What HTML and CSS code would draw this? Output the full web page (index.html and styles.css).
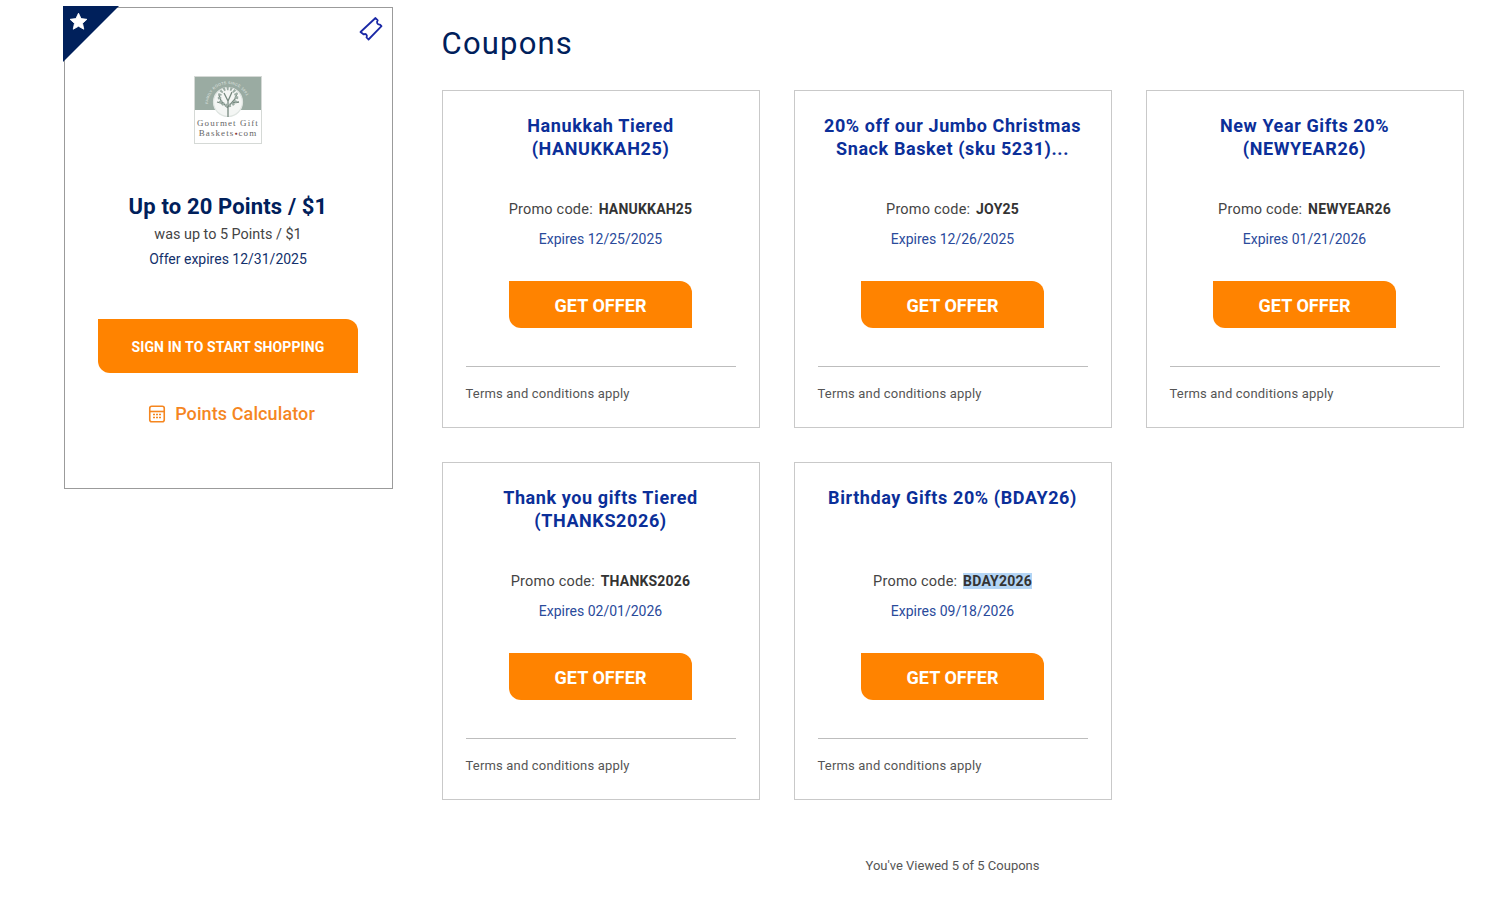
FILE: index.html
```html
<!DOCTYPE html>
<html lang="en">
<head>
<meta charset="utf-8">
<title>Coupons</title>
<link rel="stylesheet" href="styles.css">
</head>
<body>
<div class="page">
  <aside class="store">
    <div class="ribbon"></div>
    <svg class="ribbon-star" viewBox="0 0 24 24"><path d="M12 2.5l2.9 6.2 6.7.8-5 4.6 1.4 6.7L12 17.4l-6 3.4 1.4-6.7-5-4.6 6.7-.8z" fill="#fff" stroke="#fff" stroke-linejoin="round"/></svg>
    <svg class="ticket" viewBox="0 0 24 25" fill="none" stroke="#1a28a6" stroke-width="1.8" stroke-linejoin="round"><path d="M1.5 16L16.5 2l2.2 2.4c-1.6 2-.2 4.6 2.300 4.200l1.500 1.600L9.500 23.500l-2-2.100c1.300-2.300-.8-4.100-2.700-3z"/></svg>
    <div class="logo">
      <div class="logo-top">
        <svg class="logo-tree" viewBox="0 0 50 50">
          <defs><path id="logo-arc" d="M5 30a20 20 0 0 1 40 0"/></defs>
          <text class="logo-arc-text"><textPath href="#logo-arc">FAMILY ROOTS SINCE 1991</textPath></text>
          <circle cx="25" cy="28" r="14.500" fill="#f4f6f4" stroke="#dfe5e1" stroke-width="1.200"/>
          <path d="M25 43V27M25 34l-7-7M25 33l7-8M21 30l-7-2M29 29l7-1M25 27l-4-8M25 27l4-9M18 27l-2-6M32 25l2-6" stroke="#76877e" stroke-width="1.300" fill="none"/>
          <circle cx="25" cy="23" r="8.500" fill="none" stroke="#9dada5" stroke-width="3.500" stroke-dasharray="2 1.500"/>
        </svg>
      </div>
      <div class="logo-text">Gourmet Gift<br>Baskets<span class="logo-dot">●</span>com</div>
    </div>
    <h2 class="rate">Up to 20 Points / $1</h2>
    <p class="was">was up to 5 Points / $1</p>
    <p class="offer">Offer expires 12/31/2025</p>
    <a class="btn btn-signin" href="#">SIGN IN TO START SHOPPING</a>
    <a class="calc" href="#">
      <svg class="calc-icon" viewBox="0 0 18 18" fill="none" stroke="#f5861f" stroke-width="1.600"><rect x="1.750" y="1.300" width="14.500" height="15.500" rx="2"/><path d="M2 6.500h14"/><path d="M5 9.500h2M8 9.500h2M11 9.500h2M5 12.500h2M8 12.500h2M11 12.500h2" stroke-width="1.400"/></svg>
      <span>Points Calculator</span>
    </a>
  </aside>
  <main class="main">
    <h1 class="heading">Coupons</h1>
    <div class="grid">
      <article class="card">
        <h3 class="card-title">Hanukkah Tiered (HANUKKAH25)</h3>
        <p class="promo">Promo code: <b class="code">HANUKKAH25</b></p>
        <p class="expires">Expires 12/25/2025</p>
        <a class="btn btn-offer" href="#">GET OFFER</a>
        <p class="terms">Terms and conditions apply</p>
      </article>
      <article class="card">
        <h3 class="card-title">20% off our Jumbo Christmas Snack Basket (sku 5231)...</h3>
        <p class="promo">Promo code: <b class="code">JOY25</b></p>
        <p class="expires">Expires 12/26/2025</p>
        <a class="btn btn-offer" href="#">GET OFFER</a>
        <p class="terms">Terms and conditions apply</p>
      </article>
      <article class="card">
        <h3 class="card-title">New Year Gifts 20% (NEWYEAR26)</h3>
        <p class="promo">Promo code: <b class="code">NEWYEAR26</b></p>
        <p class="expires">Expires 01/21/2026</p>
        <a class="btn btn-offer" href="#">GET OFFER</a>
        <p class="terms">Terms and conditions apply</p>
      </article>
      <article class="card">
        <h3 class="card-title">Thank you gifts Tiered (THANKS2026)</h3>
        <p class="promo">Promo code: <b class="code">THANKS2026</b></p>
        <p class="expires">Expires 02/01/2026</p>
        <a class="btn btn-offer" href="#">GET OFFER</a>
        <p class="terms">Terms and conditions apply</p>
      </article>
      <article class="card">
        <h3 class="card-title">Birthday Gifts 20% (BDAY26)</h3>
        <p class="promo">Promo code: <b class="code code-selected">BDAY2026</b></p>
        <p class="expires">Expires 09/18/2026</p>
        <a class="btn btn-offer" href="#">GET OFFER</a>
        <p class="terms">Terms and conditions apply</p>
      </article>
    </div>
    <p class="viewed">You've Viewed 5 of 5 Coupons</p>
  </main>
</div>
</body>
</html>
```
FILE: styles.css
```css
* { box-sizing: border-box; }
html, body { margin: 0; padding: 0; background: #fff; }
body { font-family: Roboto, "Liberation Sans", sans-serif; color: #444; height: 907px; overflow: hidden; }
h1, h2, h3, p { margin: 0; font-weight: 400; }
a { text-decoration: none; }

.page { display: flex; align-items: flex-start; gap: 49px; padding: 7px 36px 0 63.5px; }

.store { position: relative; flex: 0 0 329px; height: 482px; border: 1px solid #9b9b9b; display: flex; flex-direction: column; align-items: center; padding-top: 68px; }
.ribbon { position: absolute; left: -2px; top: -2px; width: 0; height: 0; border-top: 56px solid #00205b; border-right: 56px solid transparent; }
.ribbon-star { position: absolute; left: 3px; top: 3px; width: 21px; height: 21px; }
.ticket { position: absolute; right: 9px; top: 8px; width: 24px; height: 25px; }

.logo { width: 68px; height: 68px; border: 1px solid #d5d9d6; background: #fff; display: flex; flex-direction: column; }
.logo-top { flex: none; height: 33px; background: #9aaba2; display: flex; justify-content: center; }
.logo-tree { width: 50px; height: 50px; flex: none; margin-top: -3px; position: relative; }
.logo-arc-text { font-family: "Liberation Sans", sans-serif; font-size: 3.600px; letter-spacing: .3px; fill: #e6ebe8; }
.logo-text { margin-top: 8px; font-family: "Liberation Serif", serif; font-size: 9px; line-height: 10px; letter-spacing: 1.100px; color: #666; text-align: center; white-space: nowrap; position: relative; }
.logo-dot { color: #8c3a3a; font-size: 5px; vertical-align: 1px; }

.rate { margin-top: 49px; font-size: 22px; line-height: 28px; font-weight: 700; color: #00205b; letter-spacing: .15px; }
.was { margin-top: 2px; font-size: 14.400px; line-height: 24px; color: #444; }
.offer { font-size: 14px; line-height: 24px; color: #12306b; }

.btn { display: flex; align-items: center; justify-content: center; background: #ff8300; color: #fff; font-weight: 700; border-radius: 0 12px 0 12px; }
.btn-signin { margin-top: 48px; width: 260px; height: 54px; padding-top: 2px; font-size: 14px; letter-spacing: .1px; }
.calc { margin: 30px 0 0 7px; display: flex; align-items: center; gap: 9px; color: #f5861f; font-size: 18px; letter-spacing: .1px; font-weight: 500; }
.calc-icon { width: 18px; height: 18px; }

.main { flex: 1; }
.heading { margin-top: 15px; font-size: 31px; line-height: 43px; letter-spacing: 1.200px; color: #00205b; font-weight: 400; }
.grid { margin-top: 25px; display: grid; grid-template-columns: repeat(3, 318px); grid-auto-rows: 338px; gap: 34px; }

.card { border: 1px solid #c9c9c9; padding: 24px 23px 0; display: flex; flex-direction: column; align-items: center; text-align: center; }
.card-title { height: 74px; font-size: 18px; line-height: 22.500px; font-weight: 700; color: #0b2f99; letter-spacing: .6px; }
.promo { margin-top: 8px; font-size: 14.500px; line-height: 24px; color: #444; letter-spacing: .2px; }
.code { margin-left: 2px; font-weight: 700; font-size: 14px; color: #333; letter-spacing: .2px; }
.code-selected { background: #b4d5f5; }
.expires { margin-top: 5px; font-size: 14px; line-height: 24px; color: #2a4a9b; }
.btn-offer { margin-top: 30px; width: 183px; height: 47px; padding-top: 1px; font-size: 18px; letter-spacing: .05px; flex: none; }
.terms { margin-top: 38px; align-self: stretch; border-top: 1px solid #bdbdbd; padding-top: 17px; text-align: left; font-size: 13px; line-height: 20px; color: #555; letter-spacing: .18px; }

.viewed { margin-top: 56px; width: 1022px; text-align: center; font-size: 13px; line-height: 20px; color: #555; }
```
